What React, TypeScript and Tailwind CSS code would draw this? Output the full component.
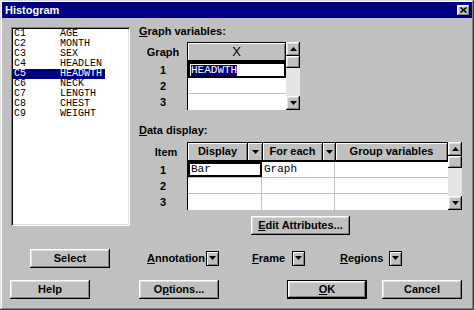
import React from "react";

const raised =
  "bg-[#c0c0c0] shadow-[inset_-1px_-1px_0_#000,inset_1px_1px_0_#fff,inset_-2px_-2px_0_#808080,inset_2px_2px_0_#dfdfdf]";
const sunken =
  "shadow-[inset_1px_1px_0_#808080,inset_-1px_-1px_0_#fff,inset_2px_2px_0_#000,inset_-2px_-2px_0_#dfdfdf]";
const sans = "font-['Liberation_Sans',Arial,sans-serif]";
const mono = "font-['Liberation_Mono','Courier_New',monospace]";

const columns = [
  ["C1", "AGE"],
  ["C2", "MONTH"],
  ["C3", "SEX"],
  ["C4", "HEADLEN"],
  ["C5", "HEADWTH"],
  ["C6", "NECK"],
  ["C7", "LENGTH"],
  ["C8", "CHEST"],
  ["C9", "WEIGHT"],
];

function Tri({ up }: { up?: boolean }) {
  return (
    <svg width="7" height="4" viewBox="0 0 7 4">
      <polygon points={up ? "3.5,0 7,4 0,4" : "0,0 7,0 3.5,4"} fill="#000" />
    </svg>
  );
}

function ScrollBar() {
  return (
    <div className="flex w-[14px] flex-col self-stretch bg-[#e4e4e4]">
      <div className={`flex h-[14px] items-center justify-center ${raised}`}>
        <Tri up />
      </div>
      <div className={`h-[12px] ${raised}`} />
      <div className="flex-1" />
      <div className={`flex h-[14px] items-center justify-center ${raised}`}>
        <Tri />
      </div>
    </div>
  );
}

function Btn({
  children,
  w,
  className = "",
  def,
}: {
  children: React.ReactNode;
  w: string;
  className?: string;
  def?: boolean;
}) {
  const inner = (
    <div className={`flex h-full w-full items-center justify-center text-[11px] font-bold ${raised}`}>
      {children}
    </div>
  );
  return (
    <div className={`h-[19px] ${w} ${className} ${def ? "border border-black" : ""}`}>{inner}</div>
  );
}

function Drop() {
  return (
    <div className="flex h-[15px] w-[13px] items-center justify-center border border-black bg-[#c0c0c0] shadow-[inset_1px_1px_0_#fff,inset_-1px_-1px_0_#808080]">
      <Tri />
    </div>
  );
}

function HeadCell({ w, children }: { w: string; children?: React.ReactNode }) {
  return (
    <div
      className={`flex h-full ${w} items-center justify-center border-r border-black bg-[#c0c0c0] text-[11px] font-bold shadow-[inset_1px_1px_0_#fff,inset_-1px_0_0_#808080]`}
    >
      {children}
    </div>
  );
}

export default function App() {
  return (
    <div
      className={`flex h-[310px] w-[474px] flex-col bg-[#c0c0c0] text-black ${sans} shadow-[inset_-1px_-1px_0_#404040,inset_1px_1px_0_#dfdfdf,inset_-2px_-2px_0_#808080,inset_2px_2px_0_#fff]`}
    >
      {/* title bar */}
      <div className="mx-[2px] mt-[2px] flex h-[16px] items-center bg-[#000080] pl-[3px] pr-[2px]">
        <span className="text-[11px] font-bold leading-none text-white">Histogram</span>
        <div className={`ml-auto flex h-[11px] w-[13px] items-center justify-center ${raised}`}>
          <svg width="7" height="6" viewBox="0 0 7 6">
            <path d="M0.5 0.5 L6.5 5.5 M6.5 0.5 L0.5 5.5" stroke="#000" strokeWidth="1.6" />
          </svg>
        </div>
      </div>

      {/* main */}
      <div className="mt-[7px] flex h-[215px]">
        <div className={`ml-[11px] mt-[2px] h-[199px] w-[119px] bg-white pl-[2px] pt-[2px] ${sunken} ${mono}`}>
          {columns.map(([c, n]) => {
            const sel = c === "C5";
            return (
              <div
                key={c}
                className={`flex h-[10px] w-[92px] text-[10px] leading-[10px] ${sel ? "bg-[#000080] text-white" : ""}`}
              >
                <span className="w-[47px] pl-[1px]">{c}</span>
                <span>{n}</span>
              </div>
            );
          })}
        </div>

        <div className="ml-[9px] flex flex-col">
          <div className="h-[12px] text-[11px] font-bold leading-[12px]">
            <span className="underline">G</span>raph variables:
          </div>

          <div className="mt-[5px] flex h-[68px]">
            <div className="flex w-[48px] flex-col text-[11px] font-bold">
              <div className="flex h-[20px] items-center justify-center">Graph</div>
              {["1", "2", "3"].map((n) => (
                <div key={n} className="flex h-[16px] items-center justify-center">
                  {n}
                </div>
              ))}
            </div>
            <div className="flex w-[99px] flex-col border-l border-t border-black bg-white">
              <div className="flex h-[19px] border-b-2 border-black">
                <HeadCell w="w-full">
                  <span className="text-[13px] font-normal">X</span>
                </HeadCell>
              </div>
              <div className={`flex h-[16px] items-center border-2 border-black px-[1px] ${mono}`}>
                <span className="bg-[#000080] text-[11px] leading-[11px] text-white">HEADWTH</span>
              </div>
              <div className="h-[16px] border-b border-[#c0c0c0]" />
              <div className="flex-1" />
            </div>
            <ScrollBar />
          </div>

          <div className="mt-[14px] h-[12px] text-[11px] font-bold leading-[12px]">
            <span className="underline">D</span>ata display:
          </div>

          <div className="mt-[6px] flex h-[68px]">
            <div className="flex w-[48px] flex-col text-[11px] font-bold">
              <div className="flex h-[20px] items-center justify-center pl-[6px]">Item</div>
              {["1", "2", "3"].map((n) => (
                <div key={n} className="flex h-[16px] items-center justify-center">
                  {n}
                </div>
              ))}
            </div>
            <div className="flex w-[261px] flex-col border-l border-t border-black bg-white">
              <div className="flex h-[19px] border-b-2 border-black">
                <HeadCell w="w-[60px]">Display</HeadCell>
                <HeadCell w="w-[15px]">
                  <Tri />
                </HeadCell>
                <HeadCell w="w-[60px]">For each</HeadCell>
                <HeadCell w="w-[13px]">
                  <Tri />
                </HeadCell>
                <HeadCell w="flex-1">Group variables</HeadCell>
              </div>
              {[0, 1, 2].map((r) => (
                <div key={r} className={`flex h-[16px] text-[11px] ${mono} ${r < 2 ? "border-b border-[#c0c0c0]" : ""}`}>
                  <div
                    className={`flex w-[74px] items-center px-[1px] ${
                      r === 0 ? "border-2 border-black" : "border-r border-[#c0c0c0]"
                    }`}
                  >
                    {r === 0 ? "Bar" : ""}
                  </div>
                  <div className="flex w-[73px] items-center border-r border-[#c0c0c0] pl-[2px]">
                    {r === 0 ? "Graph" : ""}
                  </div>
                  <div className="flex-1" />
                </div>
              ))}
            </div>
            <ScrollBar />
          </div>

          <Btn w="w-[99px]" className="ml-[112px] mt-[6px]">
            <span>
              <span className="underline">E</span>dit Attributes...
            </span>
          </Btn>
        </div>
      </div>

      {/* row 1 */}
      <div className="mt-[8px] flex h-[20px] items-center text-[11px] font-bold">
        <Btn w="w-[80px]" className="ml-[30px]">
          Select
        </Btn>
        <div className="ml-[37px] flex w-[72px] items-center justify-between">
          <span>
            <span className="underline">A</span>nnotation
          </span>
          <Drop />
        </div>
        <div className="ml-[33px] flex w-[53px] items-center justify-between">
          <span>
            <span className="underline">F</span>rame
          </span>
          <Drop />
        </div>
        <div className="ml-[35px] flex w-[62px] items-center justify-between">
          <span>
            <span className="underline">R</span>egions
          </span>
          <Drop />
        </div>
      </div>

      {/* row 2 */}
      <div className="mt-[12px] flex items-center">
        <Btn w="w-[80px]" className="ml-[10px]">
          Help
        </Btn>
        <Btn w="w-[80px]" className="ml-[49px]">
          <span>
            O<span className="underline">p</span>tions...
          </span>
        </Btn>
        <Btn w="w-[80px]" className="ml-[68px]" def>
          <span>
            <span className="underline">O</span>K
          </span>
        </Btn>
        <Btn w="w-[80px]" className="ml-[15px]">
          Cancel
        </Btn>
      </div>
    </div>
  );
}
